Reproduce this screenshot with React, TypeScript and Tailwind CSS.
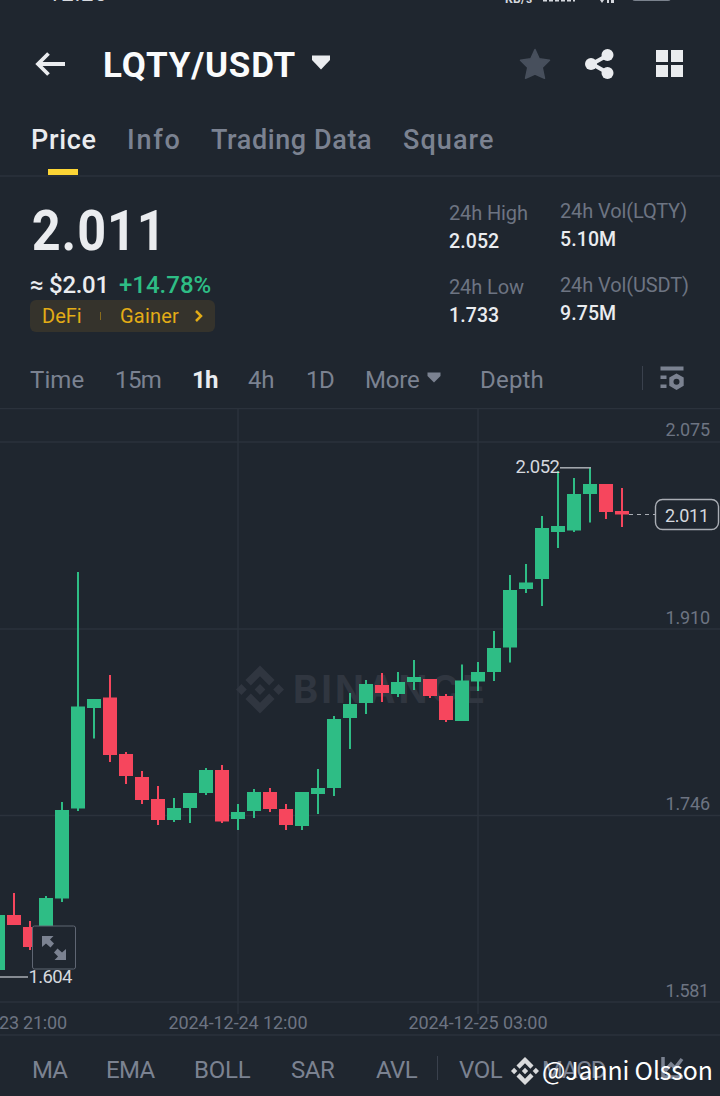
import { ReactNode } from 'react';

const UP = '#2ebd85';
const DOWN = '#f6465d';

// [center x, high, body top, body bottom, low, up?]
const candles: [number, number, number, number, number, boolean][] = [
    [-2, 915, 915, 970, 977, true],
    [14, 893, 915, 925, 925, false],
    [30, 921, 927, 947, 950, false],
    [46, 896, 898, 940, 940, true],
    [62, 802, 810, 898.5, 902, true],
    [78, 572, 706.5, 808.5, 811, true],
    [94, 699, 699, 708, 738.5, true],
    [110, 675, 697.5, 755, 762, false],
    [126, 752, 754, 776, 784, false],
    [142, 771, 777, 800, 804, false],
    [158, 786, 799, 820, 825, false],
    [174, 798, 808, 820, 822, true],
    [190, 793, 793, 808, 823, true],
    [206, 768, 770, 793, 795, true],
    [222, 765, 770, 821.5, 823, false],
    [238, 804, 812, 819, 830, true],
    [254, 789, 792, 811, 818, true],
    [270, 788, 792, 809, 812, false],
    [286, 804, 809, 825, 830, false],
    [302, 792, 792, 826, 830, true],
    [318, 769, 788, 794, 814, true],
    [334, 716, 719, 788, 796, true],
    [350, 693, 704, 718, 749, true],
    [366, 680, 684, 703, 714, true],
    [382, 673, 685, 693, 702, false],
    [398, 672, 682, 694, 697, true],
    [414, 660, 677, 682, 690, true],
    [430, 679, 679, 696, 698, false],
    [446, 694, 696, 720, 722, false],
    [462, 664.5, 680.5, 721, 721, true],
    [478, 662, 672, 681.5, 691, true],
    [494, 631, 648, 672, 681, true],
    [510, 575, 590, 647.5, 662.5, true],
    [526, 564, 582.5, 589, 593, true],
    [542, 516, 528, 579, 606, true],
    [558, 471, 526, 532, 548, true],
    [574, 478, 494, 530.5, 532, true],
    [590, 468, 484, 494, 522.5, true],
    [606, 484, 484, 512, 519, false],
    [622, 488, 511, 514.5, 527, false],
];

function BinanceMark({ className }: { className: string }) {
    return (
        <svg viewBox="0 0 24 24" className={className} fill="currentColor">
            <path d="M12 0 19.3 7.3 16.6 10 12 5.4 7.4 10 4.7 7.3Z" />
            <path d="M12 24 19.3 16.7 16.6 14 12 18.6 7.4 14 4.7 16.7Z" />
            <path d="M2.7 9.3 5.4 12 2.7 14.7 0 12Z" />
            <path d="M21.3 9.3 24 12 21.3 14.7 18.6 12Z" />
            <path d="M12 9.3 14.7 12 12 14.7 9.3 12Z" />
        </svg>
    );
}

function StatusBar() {
    return (
        <div className="h-4 overflow-hidden relative text-[#d5d8de]">
            <span className="absolute left-[48px] -top-[18px] text-[22px] leading-6 tracking-[1px]">12:20</span>
            <span className="absolute left-[505px] -top-[7px] text-[12px] leading-3 font-bold tracking-[0.4px]">KB/s</span>
            <svg className="absolute left-[540px] top-0" width="135" height="4">
                <path d="M3 0.5H35" stroke="#d5d8de" strokeWidth="2" strokeDasharray="4 2" />
                <path d="M60 0h4l-2 3zM67 0h2v3h-2zM71 0h3v3h-3z" fill="#d5d8de" />
                <rect x="92" y="-8" width="39" height="9" rx="3" fill="#7a828d" />
            </svg>
        </div>
    );
}

function Header() {
    return (
        <div className="h-24 pb-px flex items-center pl-[35px] pr-9">
            <svg width="31" height="26" viewBox="0 0 31 26" fill="none" stroke="#eaecef" strokeWidth="3.8">
                <path d="M30 13H3M13.5 2.5 3 13l10.5 10.5" />
            </svg>
            <h1 className="ml-[37px] mt-[5px] w-[192px] text-[35px] leading-10 font-bold text-[#fafbfc] tracking-[0.8px] whitespace-nowrap">
                LQTY/USDT
            </h1>
            <svg className="ml-4 -mt-0.5" width="20" height="15" viewBox="0 0 20 15" fill="#eaecef">
                <path d="M1 0.5H19V5L10 14.5 1 5Z" />
            </svg>
            <div className="ml-auto mr-px flex items-center">
                <svg width="32" height="32" viewBox="0 0 32 32" fill="#474f5c" stroke="#474f5c" strokeWidth="1.5" strokeLinejoin="round">
                    <path d="m16 1.5 4.2 9.3 10.3 1.4-7.3 7.2 2.3 10.9L16 26l-9.5 4.3 2.3-10.9L1.5 12.2l10.3-1.4Z" />
                </svg>
                <svg className="ml-[33px]" width="32" height="32" viewBox="0 0 32 32" fill="#eaecef">
                    <path d="M24 7 8 16l16 9" fill="none" stroke="#eaecef" strokeWidth="4" />
                    <circle cx="7" cy="16" r="6" />
                    <circle cx="23.5" cy="7" r="6" />
                    <circle cx="23.5" cy="25" r="6" />
                </svg>
                <div className="ml-[40px] grid grid-cols-2 gap-[3px]">
                    <i className="size-3 bg-[#eaecef]" />
                    <i className="size-3 bg-[#eaecef]" />
                    <i className="size-3 bg-[#eaecef]" />
                    <i className="size-3 bg-[#eaecef]" />
                </div>
            </div>
        </div>
    );
}

function Tabs() {
    return (
        <div className="h-[65px] pl-[31px] pt-2.5 flex text-[27px] leading-[36px] font-medium text-[#7b8291] border-b-2 border-[#272e38] whitespace-nowrap">
            <div className="w-[96px] relative text-[#eaecef] tracking-[0.7px]">
                Price
                <span className="absolute left-[17px] top-[47px] w-[30px] h-1.5 bg-[#fcd535]" />
            </div>
            <div className="w-[84px] tracking-[1.8px]">Info</div>
            <div className="w-[192px] tracking-[0.6px]">Trading Data</div>
            <div className="tracking-[1.1px]">Square</div>
        </div>
    );
}

function Stat({ label, value, className }: { label: string; value: string; className: string }) {
    return (
        <div className={className}>
            <div className="text-[20px] leading-6 text-[#6d7482] tracking-[-0.12px]">{label}</div>
            <div className="mt-[5px] text-[19.5px] leading-6 font-medium text-[#eaecef] tracking-[0.1px]">{value}</div>
        </div>
    );
}

function Ticker() {
    return (
        <div className="h-[174px] pl-[30px] pt-6 flex whitespace-nowrap">
            <div className="w-[419px]">
                <div className="h-[60px] pl-0.5 text-[56px] leading-[60px] font-bold text-[#eaecef] tracking-[1px] origin-left scale-x-90">
                    2.011
                </div>
                <div className="mt-[9px] flex text-[24px] leading-[30px] font-medium text-[#eaecef]">
                    <span className="w-[89px] tracking-[-0.3px]">≈ $2.01</span>
                    <span className="text-[#2ebd85]">+14.78%</span>
                </div>
                <div className="w-[185px] h-8 pl-3 flex items-center rounded-md bg-[#35332c] text-[20px] text-[#e3ac16]">
                    <span className="w-[58px]">DeFi</span>
                    <span className="w-px h-2 bg-[#8a6c1c]" />
                    <span className="ml-[19px] w-[74px] tracking-[0.2px]">Gainer</span>
                    <svg width="10" height="14" viewBox="0 0 10 14" fill="none" stroke="#e3ac16" strokeWidth="2.5">
                        <path d="m2 2 5 5-5 5" />
                    </svg>
                </div>
            </div>
            <div className="w-[111px]">
                <Stat className="h-[74px]" label="24h High" value="2.052" />
                <Stat className="h-[74px]" label="24h Low" value="1.733" />
            </div>
            <div className="-mt-0.5">
                <Stat className="h-[74px]" label="24h Vol(LQTY)" value="5.10M" />
                <Stat className="h-[74px]" label="24h Vol(USDT)" value="9.75M" />
            </div>
        </div>
    );
}

function Intervals() {
    return (
        <div className="h-[57px] pl-[30px] flex items-center text-[24px] leading-8 text-[#7b8291] whitespace-nowrap">
            <span className="w-[85px] tracking-[0.1px]">Time</span>
            <span className="w-[77px] tracking-[-0.6px]">15m</span>
            <span className="w-[56px] font-bold text-[#eaecef] tracking-[-0.8px]">1h</span>
            <span className="w-[58px] tracking-[-0.3px]">4h</span>
            <span className="w-[59px] tracking-[-0.4px]">1D</span>
            <span className="w-[62px] tracking-[-0.2px]">More</span>
            <svg width="14" height="11" viewBox="0 0 14 11" className="-mt-1" fill="#7b8291">
                <path d="M0.5 0.5h13V4L7 10.5 0.5 4Z" />
            </svg>
            <span className="ml-[39px] tracking-[0.2px]">Depth</span>
            <span className="ml-auto w-px h-6 -mt-1 bg-[#3a414d]" />
            <svg className="ml-[17px] mr-[35px] -mt-1" width="25" height="25" viewBox="0 0 25 25" fill="#7b8291">
                <path d="M0.5 1.5h23V5.5h-23zM0.5 10.5h6v3.5h-6zM0.5 19.5h6v3.5h-6z" />
                <path fillRule="evenodd" d="m16.5 8.5 7.2 4.1v8.2l-7.2 4.1-7.2-4.1v-8.2ZM16.5 13.7a3 3 0 1 0 0 6 3 3 0 0 0 0-6Z" />
            </svg>
        </div>
    );
}

function AxisLabel({ x, y, w, children }: { x: number; y: number; w: number; children: ReactNode }) {
    return (
        <text x={x} y={y} textLength={w} fontSize="18" fill="#6d7482">
            {children}
        </text>
    );
}

function Chart() {
    return (
        <div className="relative h-[626px]">
            <svg width="720" height="626" viewBox="0 408 720 626" className="block">
                <path
                    d="M0 408.5H720M0 442H720M0 629H720M0 815.5H720M0 1002H720M238 409V1014M478 409V1014"
                    stroke="#2b323c"
                    strokeWidth="1.5"
                />
                <svg x="236" y="665" width="48" height="49" viewBox="0 0 24 24" fill="#303640">
                    <path d="M12 0 19.3 7.3 16.6 10 12 5.4 7.4 10 4.7 7.3Z" />
                    <path d="M12 24 19.3 16.7 16.6 14 12 18.6 7.4 14 4.7 16.7Z" />
                    <path d="M2.7 9.3 5.4 12 2.7 14.7 0 12ZM21.3 9.3 24 12 21.3 14.7 18.6 12ZM12 9.3 14.7 12 12 14.7 9.3 12Z" />
                </svg>
                <text x="293" y="703" textLength="192" fontSize="38" fontWeight="700" fill="#303640" fontFamily="Inter, sans-serif">
                    BINANCE
                </text>
                {candles.map(([x, high, top, bottom, low, up]) => (
                    <g key={x} fill={up ? UP : DOWN}>
                        <rect x={x - 1} y={high} width="2" height={low - high} />
                        <rect x={x - 7} y={top} width="14" height={bottom - top} />
                    </g>
                ))}
                <path d="M560 467.8H591" stroke="#a9adb4" strokeWidth="1.5" />
                <path d="M0 977H28" stroke="#a9adb4" strokeWidth="1.5" />
                <path d="M629 514.5H655" stroke="#a9adb4" strokeWidth="1.2" strokeDasharray="4 4" />
                <rect x="655.5" y="499.5" width="63" height="30" rx="7" fill="#1f262f" stroke="#a9adb4" strokeWidth="1.4" />
                <text x="665" y="521.5" textLength="44" fontSize="18" fill="#d5d8de">2.011</text>
                <text x="515.5" y="472.5" textLength="44.5" fontSize="18.5" fill="#d5d8de">2.052</text>
                <AxisLabel x={665.5} y={436} w={44.5}>2.075</AxisLabel>
                <AxisLabel x={665.5} y={623.5} w={44.5}>1.910</AxisLabel>
                <AxisLabel x={665.5} y={809.5} w={44.5}>1.746</AxisLabel>
                <AxisLabel x={665.5} y={996.5} w={43.5}>1.581</AxisLabel>
                <AxisLabel x={-1} y={1029} w={68}>23 21:00</AxisLabel>
                <AxisLabel x={168.5} y={1029} w={139}>2024-12-24 12:00</AxisLabel>
                <AxisLabel x={408.5} y={1029} w={139}>2024-12-25 03:00</AxisLabel>
                <rect x="32.5" y="926" width="43" height="43" rx="2" fill="#1f262f" stroke="#5f6673" />
                <g fill="#7b8291">
                    <path d="M42 936H53.5L50 939.5 54 943.5 50.5 947.5 46 943.5 42 947Z" />
                    <path d="M66 960H54.5L58 956.5 54 952.5 57.5 948.5 62 952.5 66 949Z" />
                </g>
                <text x="28.5" y="982.5" textLength="44" fontSize="18.5" fill="#d5d8de">1.604</text>
            </svg>
        </div>
    );
}

function Indicators() {
    return (
        <div className="relative h-[62px] pl-8 pt-2 flex items-center border-t-2 border-[#272e38] text-[24px] text-[#7b8291] whitespace-nowrap">
            <span className="w-[74px] tracking-[-1px]">MA</span>
            <span className="w-[88px] tracking-[-0.7px]">EMA</span>
            <span className="w-[97px] tracking-[-0.2px]">BOLL</span>
            <span className="w-[85px] tracking-[-0.4px]">SAR</span>
            <span className="w-[61px] tracking-[-0.6px]">AVL</span>
            <span className="w-px h-6 -mt-1 bg-[#3a414d]" />
            <span className="ml-[21px] w-[83px] tracking-[-0.4px]">VOL</span>
            <span className="tracking-[-1.2px]">MACD</span>
            <svg className="absolute left-[661px] top-[20px]" width="23" height="24" viewBox="0 0 23 24" fill="none" stroke="#7b8291" strokeWidth="3.5">
                <path d="M2 1V21H22M4 15l6-7 4 4 7-9" />
            </svg>
            <div className="absolute left-[511px] top-[20px] flex items-center text-white">
                <BinanceMark className="size-7 text-[#d9dadc]" />
                <span className="ml-[3px] -mt-[3px] text-[24.8px] leading-8 tracking-[-0.1px] font-['Noto_Sans_CJK_SC',sans-serif]">
                    @Janni Olsson
                </span>
            </div>
        </div>
    );
}

export default function App() {
    return (
        <div className="w-[720px] h-[1096px] overflow-hidden bg-[#1f262f] font-[Roboto,sans-serif]">
            <StatusBar />
            <Header />
            <Tabs />
            <Ticker />
            <Intervals />
            <Chart />
            <Indicators />
        </div>
    );
}
